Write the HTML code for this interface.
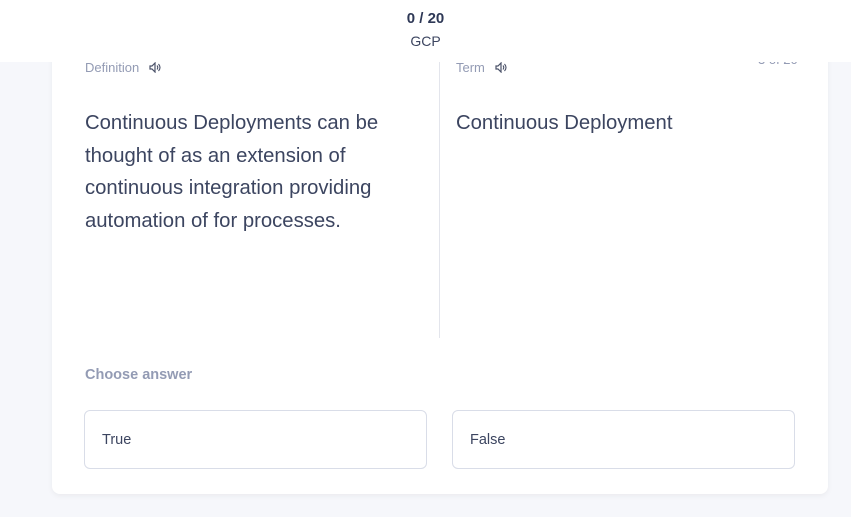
<!DOCTYPE html>
<html><head><style>
body{margin:0;width:851px;height:517px;background:#f6f7fb;font-family:"Liberation Sans",sans-serif;position:relative;overflow:hidden;color:#2e3856}
.card{position:absolute;left:52px;top:20px;width:776px;height:474px;background:#fff;border-radius:8px;box-shadow:0 2px 6px rgba(0,0,0,.05)}
.hdr{position:absolute;left:0;top:0;width:851px;height:62px;background:#fff;text-align:center}
.t1{position:absolute;top:10px;width:100%;font-weight:bold;font-size:15px;color:#2e3856}
.t2{position:absolute;top:33px;width:100%;font-size:14px;color:#3c4560}
.lbl{position:absolute;font-size:13px;color:#939bb4;top:60px}
.lbl svg{vertical-align:-1px;margin-left:10px}
.big{position:absolute;font-size:20.3px;line-height:32.5px;color:#3c4560}
.div{position:absolute;left:439px;top:62px;width:1px;height:276px;background:#e3e5ec}
.btn{position:absolute;top:410px;width:343px;height:59px;border:1px solid #d9dde8;border-radius:6px;background:#fff;font-size:14.5px;line-height:59px;box-sizing:border-box;padding-left:17px;color:#3c4560}
</style></head><body>
<div class="card"></div>
<div class="div"></div>
<div style="position:absolute;left:758px;top:52px;font-size:13px;color:#939bb4">3 of 20</div>
<div class="lbl" style="left:85px">Definition<svg width="12" height="11" viewBox="0 0 12 11"><path d="M1 4h2l3-3v9L3 7H1z" fill="none" stroke="#4a5168" stroke-width="1.2"/><path d="M8 3.5q1.5 2 0 4M9.5 2q3 3.5 0 7" fill="none" stroke="#4a5168" stroke-width="1.1"/></svg></div>
<div class="lbl" style="left:456px">Term<svg width="12" height="11" viewBox="0 0 12 11"><path d="M1 4h2l3-3v9L3 7H1z" fill="none" stroke="#4a5168" stroke-width="1.2"/><path d="M8 3.5q1.5 2 0 4M9.5 2q3 3.5 0 7" fill="none" stroke="#4a5168" stroke-width="1.1"/></svg></div>
<div class="big" style="left:85px;top:107px;width:340px">Continuous Deployments can be thought of as an extension of continuous integration providing automation of for processes.</div>
<div class="big" style="left:456px;top:107px">Continuous Deployment</div>
<div style="position:absolute;left:85px;top:367px;font-size:14.5px;font-weight:bold;color:#939bb4">Choose answer</div>
<div class="btn" style="left:84px">True</div>
<div class="btn" style="left:452px">False</div>
<div class="hdr"><div class="t1">0 / 20</div><div class="t2">GCP</div></div>
</body></html>
